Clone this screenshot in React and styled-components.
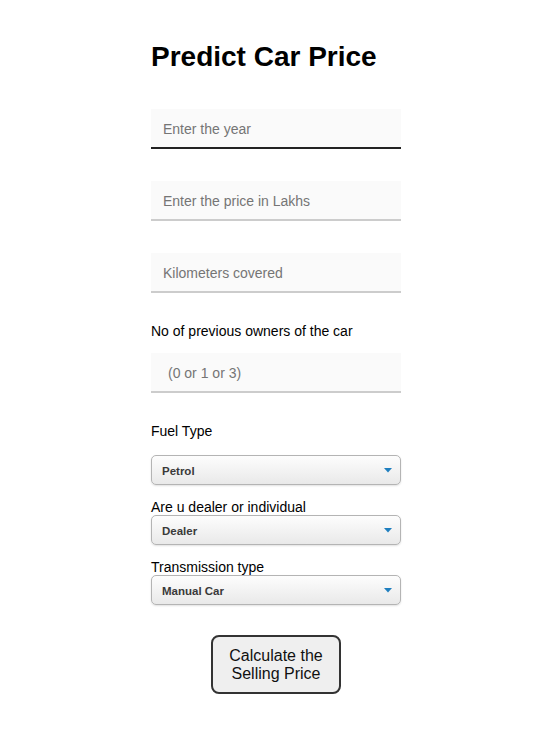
import styled, { createGlobalStyle } from "styled-components";

const GlobalStyle = createGlobalStyle`
	body {
		margin: 0;
		background: #ffffff;
		font-family: "Liberation Sans", Arial, sans-serif;
		color: #000000;
	}
`;

const Page = styled.div`
	padding: 41px 0 40px 151px;
`;

const Form = styled.form`
	display: flex;
	flex-direction: column;
	width: 250px;
`;

const Title = styled.h1`
	margin: 0 0 36px;
	font-size: 28px;
	line-height: 32px;
	font-weight: bold;
`;

const Input = styled.input`
	box-sizing: border-box;
	width: 100%;
	height: 40px;
	margin: 0 0 ${(p) => p.$gap}px;
	padding: 2px 0 0 ${(p) => (p.$indent ? 17 : 12)}px;
	border: none;
	border-bottom: 2px solid ${(p) => (p.$active ? "#222222" : "#cccccc")};
	background: #fafafa;
	font-family: inherit;
	font-size: 14px;
	color: #333333;
	outline: none;

	&::placeholder {
		color: #757575;
	}
`;

const Label = styled.label`
	display: block;
	margin: 0 0 ${(p) => p.$gap}px;
	font-size: 14px;
	line-height: 16px;
`;

const SelectWrap = styled.div`
	position: relative;
	margin: 0 0 ${(p) => p.$gap}px;
`;

const Select = styled.select`
	box-sizing: border-box;
	width: 100%;
	height: 30px;
	padding: 1px 24px 0 10px;
	appearance: none;
	border: 1px solid #b4b4b4;
	border-radius: 5px;
	background: linear-gradient(#fdfdfd, #e9e9e9);
	box-shadow: 0 1px 2px rgba(0, 0, 0, 0.12);
	font-family: inherit;
	font-size: 11.5px;
	font-weight: bold;
	color: #3a3a3a;
	outline: none;
`;

const Arrow = styled.svg`
	position: absolute;
	right: 9px;
	top: 13px;
	pointer-events: none;
`;

const Submit = styled.button`
	align-self: center;
	box-sizing: border-box;
	width: 130px;
	height: 59px;
	padding: 0 8px;
	border: 2px solid #333333;
	border-radius: 8px;
	background: #efefef;
	font-family: inherit;
	font-size: 16px;
	line-height: 18px;
	color: #111111;
`;

const Dropdown = ({ options, gap }) => (
	<SelectWrap $gap={gap}>
		<Select>
			{options.map((o) => (
				<option key={o}>{o}</option>
			))}
		</Select>
		<Arrow width="8" height="5" viewBox="0 0 8 5">
			<polygon points="0,0 8,0 4,4.5" fill="#1f7fbf" />
		</Arrow>
	</SelectWrap>
);

const App = () => {
	return (
		<Page>
			<GlobalStyle />
			<Form onSubmit={(e) => e.preventDefault()}>
				<Title>Predict Car Price</Title>
				<Input placeholder="Enter the year" $active $gap={32} />
				<Input placeholder="Enter the price in Lakhs" $gap={32} />
				<Input placeholder="Kilometers covered" $gap={30} />
				<Label $gap={14}>No of previous owners of the car</Label>
				<Input placeholder="(0 or 1 or 3)" $indent $gap={30} />
				<Label $gap={16}>Fuel Type</Label>
				<Dropdown options={["Petrol", "Diesel", "CNG"]} gap={14} />
				<Label $gap={0}>Are u dealer or individual</Label>
				<Dropdown options={["Dealer", "Individual"]} gap={14} />
				<Label $gap={0}>Transmission type</Label>
				<Dropdown options={["Manual Car", "Automatic Car"]} gap={30} />
				<Submit type="submit">Calculate the Selling Price</Submit>
			</Form>
		</Page>
	);
};

export default App;
